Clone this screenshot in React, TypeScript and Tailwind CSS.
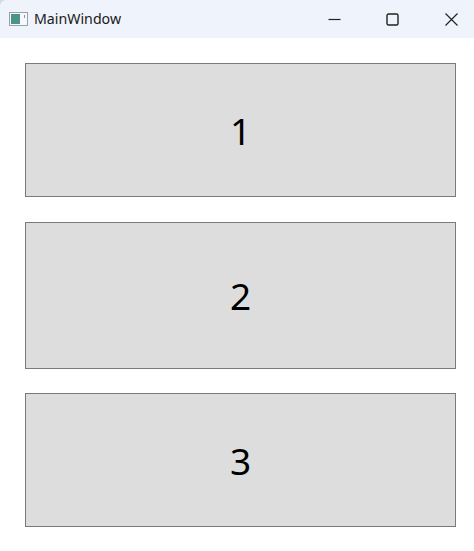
const panels = [
  { label: "1", size: "h-[134px] mb-[25px]" },
  { label: "2", size: "h-[147px] mb-[24px]" },
  { label: "3", size: "h-[134px]" }
];

const App = () => {
  return (
    <div className="w-[474px] h-[551px] bg-white flex flex-col overflow-hidden font-['Noto_Sans',sans-serif]">
      {/* Title bar */}
      <div className="bg-[#d3d7e4] shrink-0">
        <div className="h-[38px] bg-[#eff3fb] rounded-tl-[6px] flex items-center justify-between">
          <div className="flex items-center pl-[9px] gap-[6px]">
            <svg width="19" height="16" viewBox="0 0 19 16" fill="none">
              <rect x="0.5" y="1.5" width="18" height="13" fill="#f6f8fb" stroke="#9aa0a8" />
              <rect x="2" y="3" width="9" height="10" fill="#4a9488" />
              <rect x="15" y="4" width="1" height="3" fill="#8a9aa5" />
            </svg>
            <span className="text-[14.2px] text-[#1a1a1a]">MainWindow</span>
          </div>
          <div className="flex items-center gap-[45px] pr-[16px]">
            <svg width="13" height="13" viewBox="0 0 13 13" fill="none">
              <path d="M0.5 6.5H12.5" stroke="#222" strokeWidth="1.2" />
            </svg>
            <svg className="mr-[1px]" width="13" height="13" viewBox="0 0 13 13" fill="none">
              <rect x="1" y="1" width="11" height="11" rx="1.5" stroke="#222" strokeWidth="1.4" />
            </svg>
            <svg width="13" height="13" viewBox="0 0 13 13" fill="none">
              <path d="M0.5 0.5L12.5 12.5M12.5 0.5L0.5 12.5" stroke="#222" strokeWidth="1.2" />
            </svg>
          </div>
        </div>
      </div>
      {/* Panels */}
      <div className="flex flex-col pt-[25px] pl-[25px] pr-[18px]">
        {panels.map((panel) => (
          <div
            key={panel.label}
            className={`${panel.size} bg-[#dddddd] border border-[#7a7a7a] flex items-center justify-center text-[37px] leading-none text-black`}
          >
            {panel.label}
          </div>
        ))}
      </div>
    </div>
  );
};

export default App;
